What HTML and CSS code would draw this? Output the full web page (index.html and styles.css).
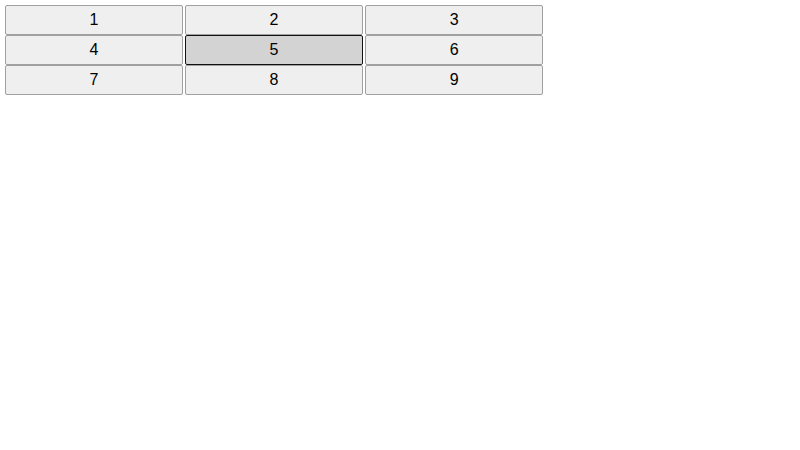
FILE: index.html
```html
<!DOCTYPE html>
<html>
<head>
<meta charset="utf-8">
<link rel="stylesheet" href="styles.css">
</head>
<body>
<div class="pad">
  <button class="key">1</button>
  <button class="key">2</button>
  <button class="key">3</button>
  <button class="key">4</button>
  <button class="key active">5</button>
  <button class="key">6</button>
  <button class="key">7</button>
  <button class="key">8</button>
  <button class="key">9</button>
</div>
</body>
</html>
```
FILE: styles.css
```css
html, body {
  margin: 0;
  background: #fff;
}
body {
  padding: 5px;
}
.pad {
  display: grid;
  width: 538px;
  grid-template-columns: repeat(3, 1fr);
  grid-auto-rows: 30px;
  column-gap: 2.5px;
  row-gap: 0;
}
.key {
  margin: 0;
  padding: 0;
  font-family: "Liberation Sans", Arial, sans-serif;
  font-size: 16px;
  color: #000;
  background: #efefef;
  border: 1px solid #a0a0a0;
  border-radius: 2px;
}
.key.active {
  background: #d3d3d3;
  border-color: #111;
}
```
